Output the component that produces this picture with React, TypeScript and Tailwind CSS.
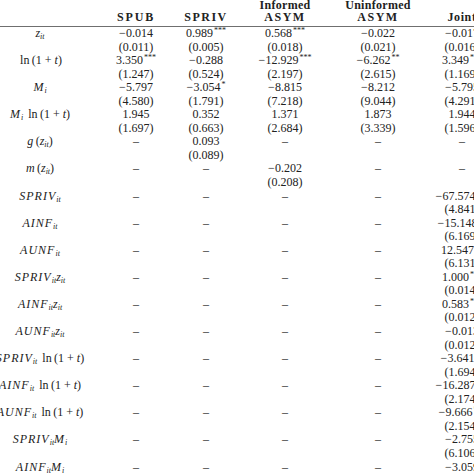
import type { ReactNode } from 'react'

type Cell = string | [string, string, string]

const Sub = ({ children }: { children: ReactNode }) => (
  <sub className="text-[8px] italic">{children}</sub>
)

const Zit = () => (
  <>
    <i>z</i>
    <Sub>it</Sub>
  </>
)

const Lnt = () => (
  <span className="ml-[2px]">
    ln{'\u2009'}(1 + <i>t</i>)
  </span>
)

const Var = ({ name, sub }: { name: string; sub: string }) => (
  <>
    <i className="tracking-[1px]">{name}</i>
    <Sub>{sub}</Sub>
  </>
)

const D = '–'

const ROWS: { label: ReactNode; cells: Cell[] }[] = [
  {
    label: <Zit />,
    cells: [
      ['−0.014', '', '(0.011)'],
      ['0.989', '***', '(0.005)'],
      ['0.568', '***', '(0.018)'],
      ['−0.022', '', '(0.021)'],
      ['−0.017', '', '(0.016)'],
    ],
  },
  {
    label: <Lnt />,
    cells: [
      ['3.350', '***', '(1.247)'],
      ['−0.288', '', '(0.524)'],
      ['−12.929', '***', '(2.197)'],
      ['−6.262', '**', '(2.615)'],
      ['3.349', '***', '(1.169)'],
    ],
  },
  {
    label: <Var name="M" sub="i" />,
    cells: [
      ['−5.797', '', '(4.580)'],
      ['−3.054', '*', '(1.791)'],
      ['−8.815', '', '(7.218)'],
      ['−8.212', '', '(9.044)'],
      ['−5.795', '', '(4.291)'],
    ],
  },
  {
    label: (
      <>
        <Var name="M" sub="i" /> <Lnt />
      </>
    ),
    cells: [
      ['1.945', '', '(1.697)'],
      ['0.352', '', '(0.663)'],
      ['1.371', '', '(2.684)'],
      ['1.873', '', '(3.339)'],
      ['1.944', '', '(1.596)'],
    ],
  },
  {
    label: (
      <>
        <i>g</i>{'\u2009'}(<Zit />)
      </>
    ),
    cells: [D, ['0.093', '', '(0.089)'], D, D, D],
  },
  {
    label: (
      <>
        <i>m</i>{'\u2009'}(<Zit />)
      </>
    ),
    cells: [D, D, ['−0.202', '', '(0.208)'], D, D],
  },
  { label: <Var name="SPRIV" sub="it" />, cells: [D, D, D, D, ['−67.574', '***', '(4.841)']] },
  { label: <Var name="AINF" sub="it" />, cells: [D, D, D, D, ['−15.148', '**', '(6.169)']] },
  { label: <Var name="AUNF" sub="it" />, cells: [D, D, D, D, ['12.547', '**', '(6.131)']] },
  {
    label: (
      <>
        <Var name="SPRIV" sub="it" />
        <Zit />
      </>
    ),
    cells: [D, D, D, D, ['1.000', '***', '(0.014)']],
  },
  {
    label: (
      <>
        <Var name="AINF" sub="it" />
        <Zit />
      </>
    ),
    cells: [D, D, D, D, ['0.583', '***', '(0.012)']],
  },
  {
    label: (
      <>
        <Var name="AUNF" sub="it" />
        <Zit />
      </>
    ),
    cells: [D, D, D, D, ['−0.013', '', '(0.012)']],
  },
  {
    label: (
      <>
        <Var name="SPRIV" sub="it" /> <Lnt />
      </>
    ),
    cells: [D, D, D, D, ['−3.641', '**', '(1.694)']],
  },
  {
    label: (
      <>
        <Var name="AINF" sub="it" /> <Lnt />
      </>
    ),
    cells: [D, D, D, D, ['−16.287', '***', '(2.174)']],
  },
  {
    label: (
      <>
        <Var name="AUNF" sub="it" /> <Lnt />
      </>
    ),
    cells: [D, D, D, D, ['−9.666', '***', '(2.154)']],
  },
  {
    label: (
      <>
        <Var name="SPRIV" sub="it" />
        <Var name="M" sub="i" />
      </>
    ),
    cells: [D, D, D, D, ['−2.755', '', '(6.106)']],
  },
  {
    label: (
      <>
        <Var name="AINF" sub="it" />
        <Var name="M" sub="i" />
      </>
    ),
    cells: [D, D, D, D, ['−3.059', '', '(6.231)']],
  },
]

const GRID = 'grid grid-cols-[80px_112px_28px_130px_56px_112px]'
const LINE = 'h-[13.55px] leading-[13.55px] flex justify-center whitespace-nowrap'

function ValueCell({ cell }: { cell: Cell }) {
  if (typeof cell === 'string') {
    return (
      <div className="flex flex-col">
        <div className={LINE}>{cell}</div>
        <div className={LINE} />
      </div>
    )
  }
  const [value, stars, se] = cell
  return (
    <div className="flex flex-col">
      <div className={LINE}>
        <span>
          {value}
          {stars && <sup className="text-[8px] ml-px">{stars}</sup>}
        </span>
      </div>
      <div className={LINE}>{se}</div>
    </div>
  )
}

export default function App() {
  return (
    <div className="w-[474px] h-[474px] overflow-hidden bg-white text-[#222] text-[12px] font-['Liberation_Serif','Times_New_Roman',serif]">
      <div className="w-[518px]">
        {/* Header */}
        <div className={`${GRID} font-bold leading-[12px] -mt-px`}>
          <div />
          <div className="flex flex-col items-center justify-end">
            <span className="tracking-[1.8px]">SPUB</span>
          </div>
          <div className="flex flex-col items-center justify-end">
            <span className="tracking-[1.5px]">SPRIV</span>
          </div>
          <div className="flex flex-col items-center">
            <span className="tracking-[0.3px]">Informed</span>
            <span className="tracking-[1.5px]">ASYM</span>
          </div>
          <div className="flex flex-col items-center">
            <span className="tracking-[0.3px]">Uninformed</span>
            <span className="tracking-[1.5px]">ASYM</span>
          </div>
          <div className="flex flex-col items-center justify-end">
            <span className="tracking-[0.6px]">Joint</span>
          </div>
        </div>
        <div className="mt-[3px] h-px bg-[#6f6f6f]" />

        {/* Body */}
        <div className="flex flex-col">
          {ROWS.map((row, i) => (
            <div key={i} className={GRID}>
              <div className={LINE}>
                <span>{row.label}</span>
              </div>
              {row.cells.map((c, j) => (
                <ValueCell key={j} cell={c} />
              ))}
            </div>
          ))}
        </div>
      </div>
    </div>
  )
}
